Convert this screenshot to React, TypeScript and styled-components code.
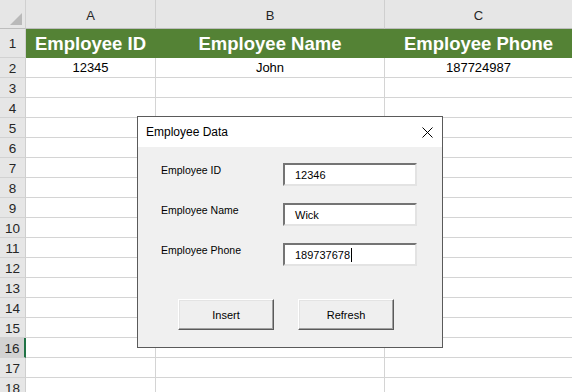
import React from "react";
import styled, { createGlobalStyle } from "styled-components";

const Global = createGlobalStyle`
  html, body { margin: 0; padding: 0; background: #ffffff; }
  body { overflow: hidden; font-family: "Liberation Sans", Arial, sans-serif; }
`;

const Page = styled.div`
  position: relative;
  width: 572px;
  height: 392px;
  overflow: hidden;
`;

const Sheet = styled.div`
  display: grid;
  grid-template-columns: 26px 130px 229px 188px;
  grid-template-rows: 29px 29px;
  grid-auto-rows: 20px;
  width: 573px;
`;

const Corner = styled.div`
  position: relative;
  background: #e6e6e6;
  border-right: 1px solid #d0d0d0;
  border-bottom: 1px solid #bdbdbd;
  box-sizing: border-box;
  &::after {
    content: "";
    position: absolute;
    right: 3px;
    bottom: 3px;
    width: 0;
    height: 0;
    border-left: 12px solid transparent;
    border-bottom: 12px solid #b9b9b9;
  }
`;

const ColHeader = styled.div`
  background: #e6e6e6;
  border-right: 1px solid #cfcfcf;
  border-bottom: 1px solid #bdbdbd;
  box-sizing: border-box;
  display: flex;
  align-items: center;
  justify-content: center;
  padding-top: 2px;
  font-size: 13px;
  color: #262626;
`;

const RowHeader = styled.div<{ $selected?: boolean }>`
  background: ${(p) => (p.$selected ? "#d2d2d2" : "#e6e6e6")};
  border-right: ${(p) => (p.$selected ? "2px solid #217346" : "1px solid #cfcfcf")};
  border-bottom: 1px solid #d2d2d2;
  box-sizing: border-box;
  display: flex;
  align-items: center;
  justify-content: center;
  font-size: 13.5px;
  color: #262626;
  padding-top: 1px;
`;

const Cell = styled.div<{ $head?: boolean }>`
  box-sizing: border-box;
  border-right: 1px solid ${(p) => (p.$head ? "#548235" : "#d4d4d4")};
  border-bottom: 1px solid ${(p) => (p.$head ? "#548235" : "#d4d4d4")};
  background: ${(p) => (p.$head ? "#548235" : "#ffffff")};
  color: ${(p) => (p.$head ? "#ffffff" : "#000000")};
  font-size: ${(p) => (p.$head ? "18.5px" : "13px")};
  font-weight: ${(p) => (p.$head ? 700 : 400)};
  display: flex;
  align-items: center;
  justify-content: center;
  white-space: nowrap;
  overflow: hidden;
  padding-top: ${(p) => (p.$head ? "1px" : "0")};
`;

const Dialog = styled.div`
  position: absolute;
  left: 137px;
  top: 116px;
  width: 306px;
  height: 232px;
  box-sizing: border-box;
  border: 1px solid #5a5a5a;
  background: #f0f0f0;
  display: flex;
  flex-direction: column;
`;

const TitleBar = styled.div`
  height: 30px;
  background: #ffffff;
  display: flex;
  align-items: center;
  justify-content: space-between;
  padding: 0 9px 0 8px;
  font-size: 12px;
  color: #000;
`;

const Body = styled.div`
  flex: 1;
  padding: 16px 0 0 23px;
  display: flex;
  flex-direction: column;
`;

const Form = styled.div`
  display: grid;
  grid-template-columns: 122px 134px;
  grid-auto-rows: 23px;
  row-gap: 17px;
`;

const Label = styled.div`
  font-size: 10.5px;
  line-height: 13px;
  padding-top: 1px;
  color: #000;
`;

const TextBox = styled.div`
  box-sizing: border-box;
  height: 23px;
  background: #ffffff;
  border: 2px solid;
  border-color: #747474 #e3e3e3 #e3e3e3 #747474;
  padding-left: 10px;
  font-size: 11px;
  color: #000;
  display: flex;
  align-items: center;
`;

const Caret = styled.span`
  display: inline-block;
  width: 1px;
  height: 14px;
  background: #000;
  margin-left: 1px;
`;

const Buttons = styled.div`
  display: flex;
  gap: 24px;
  margin: 33px 0 0 17px;
`;

const Button = styled.div`
  box-sizing: border-box;
  width: 96px;
  height: 31px;
  background: #efefef;
  border: 1px solid;
  border-color: #ffffff #5a5a5a #5a5a5a #ffffff;
  box-shadow: inset -1px -1px 0 #a0a0a0, inset 1px 1px 0 #e3e3e3;
  display: flex;
  align-items: center;
  justify-content: center;
  font-size: 11px;
  color: #000;
`;

const CloseIcon = () => (
  <svg width="11" height="11" viewBox="0 0 11 11">
    <path d="M0.5 0.5 L10.5 10.5 M10.5 0.5 L0.5 10.5" stroke="#000" strokeWidth="1" fill="none" />
  </svg>
);

const cols = ["A", "B", "C"];
const heads = ["Employee ID", "Employee Name", "Employee Phone"];
const data = ["12345", "John", "187724987"];

export default function App() {
  const rows = [];
  for (let r = 3; r <= 18; r++) {
    rows.push(
      <React.Fragment key={r}>
        <RowHeader $selected={r === 16}>{r}</RowHeader>
        <Cell />
        <Cell />
        <Cell />
      </React.Fragment>
    );
  }
  return (
    <Page>
      <Global />
      <Sheet>
        <Corner />
        {cols.map((c) => (
          <ColHeader key={c}>{c}</ColHeader>
        ))}
        <RowHeader>1</RowHeader>
        {heads.map((h) => (
          <Cell key={h} $head>
            {h}
          </Cell>
        ))}
        <RowHeader>2</RowHeader>
        {data.map((d) => (
          <Cell key={d}>{d}</Cell>
        ))}
        {rows}
      </Sheet>
      <Dialog>
        <TitleBar>
          <span>Employee Data</span>
          <CloseIcon />
        </TitleBar>
        <Body>
          <Form>
            <Label>Employee ID</Label>
            <TextBox>12346</TextBox>
            <Label>Employee Name</Label>
            <TextBox>Wick</TextBox>
            <Label>Employee Phone</Label>
            <TextBox>
              189737678
              <Caret />
            </TextBox>
          </Form>
          <Buttons>
            <Button>Insert</Button>
            <Button>Refresh</Button>
          </Buttons>
        </Body>
      </Dialog>
    </Page>
  );
}
